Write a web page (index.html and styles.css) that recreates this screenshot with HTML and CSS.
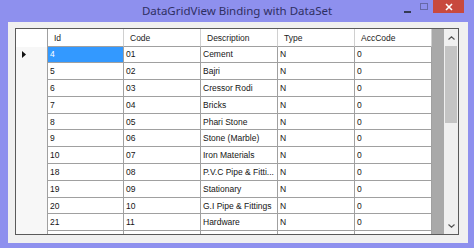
FILE: index.html
```html
<!DOCTYPE html>
<html>
<head>
<meta charset="utf-8">
<link rel="stylesheet" href="styles.css">
</head>
<body>
<div class="window">
  <div class="titlebar">
    <div class="title">DataGridView Binding with DataSet</div>
    <div class="controls">
      <div class="btn-min"></div>
      <div class="btn-max"></div>
      <div class="btn-close"><svg width="8" height="8" viewBox="0 0 8 8"><path d="M1 1 L7 7 M7 1 L1 7" stroke="#fff" stroke-width="1.6" fill="none"/></svg></div>
    </div>
  </div>
  <div class="client">
    <div class="dgv">
      <div class="dgv-body">
        <div class="row hrow">
          <div class="cell rh corner"></div>
          <div class="cell c-id">Id</div><div class="cell c-col">Code</div><div class="cell c-col">Description</div><div class="cell c-col">Type</div><div class="cell c-col">AccCode</div>
        </div>
        <div class="row"><div class="cell rh"><svg class="cur" width="4" height="7" viewBox="0 0 4 7"><path d="M0 0 L4 3.5 L0 7 Z" fill="#111"/></svg></div><div class="cell c-id sel">4</div><div class="cell c-col">01</div><div class="cell c-col">Cement</div><div class="cell c-col">N</div><div class="cell c-col">0</div></div>
        <div class="row"><div class="cell rh"></div><div class="cell c-id">5</div><div class="cell c-col">02</div><div class="cell c-col">Bajri</div><div class="cell c-col">N</div><div class="cell c-col">0</div></div>
        <div class="row"><div class="cell rh"></div><div class="cell c-id">6</div><div class="cell c-col">03</div><div class="cell c-col">Cressor Rodi</div><div class="cell c-col">N</div><div class="cell c-col">0</div></div>
        <div class="row"><div class="cell rh"></div><div class="cell c-id">7</div><div class="cell c-col">04</div><div class="cell c-col">Bricks</div><div class="cell c-col">N</div><div class="cell c-col">0</div></div>
        <div class="row"><div class="cell rh"></div><div class="cell c-id">8</div><div class="cell c-col">05</div><div class="cell c-col">Phari Stone</div><div class="cell c-col">N</div><div class="cell c-col">0</div></div>
        <div class="row"><div class="cell rh"></div><div class="cell c-id">9</div><div class="cell c-col">06</div><div class="cell c-col">Stone (Marble)</div><div class="cell c-col">N</div><div class="cell c-col">0</div></div>
        <div class="row"><div class="cell rh"></div><div class="cell c-id">10</div><div class="cell c-col">07</div><div class="cell c-col">Iron Materials</div><div class="cell c-col">N</div><div class="cell c-col">0</div></div>
        <div class="row"><div class="cell rh"></div><div class="cell c-id">18</div><div class="cell c-col">08</div><div class="cell c-col">P.V.C Pipe &amp; Fitti...</div><div class="cell c-col">N</div><div class="cell c-col">0</div></div>
        <div class="row"><div class="cell rh"></div><div class="cell c-id">19</div><div class="cell c-col">09</div><div class="cell c-col">Stationary</div><div class="cell c-col">N</div><div class="cell c-col">0</div></div>
        <div class="row"><div class="cell rh"></div><div class="cell c-id">20</div><div class="cell c-col">10</div><div class="cell c-col">G.I Pipe &amp; Fittings</div><div class="cell c-col">N</div><div class="cell c-col">0</div></div>
        <div class="row"><div class="cell rh"></div><div class="cell c-id">21</div><div class="cell c-col">11</div><div class="cell c-col">Hardware</div><div class="cell c-col">N</div><div class="cell c-col">0</div></div>
        <div class="row"><div class="cell rh"></div><div class="cell c-id"></div><div class="cell c-col"></div><div class="cell c-col"></div><div class="cell c-col"></div><div class="cell c-col"></div></div>
      </div>
      <div class="vscroll">
        <div class="arrow"><svg width="7" height="4" viewBox="0 0 7 4"><path d="M0.5 3.5 L3.5 0.8 L6.5 3.5" fill="none" stroke="#555" stroke-width="1.2"/></svg></div>
        <div class="thumb"></div>
        <div class="track"></div>
        <div class="arrow"><svg width="7" height="4" viewBox="0 0 7 4"><path d="M0.5 0.5 L3.5 3.2 L6.5 0.5" fill="none" stroke="#555" stroke-width="1.2"/></svg></div>
      </div>
    </div>
  </div>
</div>
</body>
</html>
```

FILE: styles.css
```css
html, body {
  margin: 0;
  padding: 0;
}
body {
  width: 474px;
  height: 248px;
  overflow: hidden;
  background: #8e90ee;
}
.window {
  width: 474px;
  height: 248px;
  background: #8e90ee;
  display: flex;
  flex-direction: column;
}
.titlebar {
  flex: none;
  height: 22px;
  position: relative;
}
.title {
  text-align: center;
  font-family: "Noto Sans", "Open Sans", sans-serif;
  font-size: 11.5px;
  line-height: 22px;
  color: #2e2f62;
  white-space: nowrap;
}
.controls {
  position: absolute;
  top: 0;
  right: 10px;
  display: flex;
  align-items: flex-start;
  height: 13px;
}
.btn-min {
  flex: none;
  width: 7px;
  height: 2px;
  background: #333a55;
  margin-top: 11px;
  margin-right: 9px;
}
.btn-max {
  flex: none;
  width: 6px;
  height: 5px;
  border: 1px solid #6668a8;
  margin-top: 3px;
  margin-right: 5px;
}
.btn-close {
  flex: 0 0 31px;
  width: 31px;
  height: 13px;
  background: #c8493e;
  display: flex;
  align-items: center;
  justify-content: center;
}
.client {
  flex: 1;
  min-height: 0;
  margin: 0 6px 5px 8px;
  background: #f0f0f0;
  padding: 6px 9px 8px 7px;
  display: flex;
}
.dgv {
  flex: 1;
  min-height: 0;
  border: 1px solid #5a5a5a;
  display: flex;
  overflow: hidden;
}
.dgv-body {
  flex: 1;
  min-height: 0;
  background: #a9a9a9;
  overflow: hidden;
  font-family: "Liberation Sans", Arial, sans-serif;
  font-size: 8.5px;
  color: #151515;
}
.row {
  display: flex;
  height: 16.8px;
}
.cell {
  flex: none;
  box-sizing: border-box;
  background: #fff;
  border-right: 1px solid #a0a0a0;
  border-bottom: 1px solid #a0a0a0;
  padding-left: 2px;
  white-space: nowrap;
  overflow: hidden;
  display: flex;
  align-items: center;
}
.rh {
  width: 32px;
  background: #f7f7f7;
  border-bottom: none;
  padding-left: 6px;
}
.c-id { width: 76px; }
.c-col { width: 77px; }
.hrow {
  height: 17.5px;
}
.hrow .cell {
  background: #fff;
  border-right-color: #d0d0d0;
  padding-left: 6px;
  padding-top: 1px;
  color: #222;
}
.hrow .corner {
  border-right-color: #a0a0a0;
}
.sel {
  background: #3399ff;
  color: #fff;
}
.cur {
  display: block;
}
.vscroll {
  flex: none;
  width: 14px;
  background: #f0f0f0;
  display: flex;
  flex-direction: column;
}
.arrow {
  height: 17px;
  display: flex;
  align-items: center;
  justify-content: center;
}
.thumb {
  height: 77px;
  margin: 0 1px;
  background: #c4c4c4;
}
.track {
  flex: 1;
}
```
